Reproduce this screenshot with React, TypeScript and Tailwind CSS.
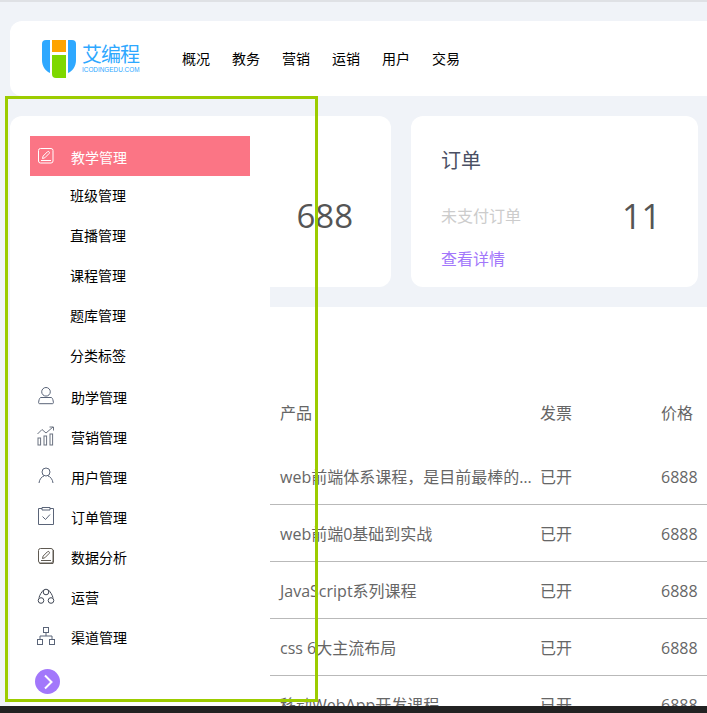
import React from 'react';

const topNav = ['概况', '教务', '营销', '运销', '用户', '交易'];
const subItems = ['班级管理', '直播管理', '课程管理', '题库管理', '分类标签'];
const rows = ['web前端体系课程，是目前最棒的课程体系', 'web前端0基础到实战', 'JavaScript系列课程', 'css 6大主流布局', '移动WebApp开发课程'];

function PenBox({ color, shadow }: { color: string; shadow?: boolean }) {
  return (
    <svg width="18" height="18" viewBox="0 0 18 18" fill="none" stroke={color} strokeWidth="1">
      <rect x="1.500" y="1.500" width="14.500" height="14.500" rx="2" />
      <path d="M5.500 11.500l.6-2.400 4.300-4.300a1.100 1.100 0 0 1 1.700 1.700l-4.300 4.300z" />
      <path d="M4 13.500h10" />
      {shadow && <path d="M2.500 16.500h13.500a1 1 0 0 0 .5-1V3" />}
    </svg>
  );
}

function PersonBox() {
  return (
    <svg width="18" height="18" viewBox="0 0 18 18" fill="none" stroke="#5a6478" strokeWidth="1">
      <circle cx="9" cy="4.800" r="4.300" />
      <path d="M3.500 10.500h11c1 .6 1.800 3 1.900 5.200 0 .6-.4 1-1 1H2.600c-.6 0-1-.4-1-1 .1-2.200.9-4.600 1.900-5.200z" />
    </svg>
  );
}

function ChartIcon() {
  return (
    <svg width="18" height="20" viewBox="0 0 18 20" fill="none" stroke="#6b7280" strokeWidth="1">
      <rect x="1" y="12" width="2.600" height="7" />
      <rect x="7" y="10" width="2.600" height="9" />
      <rect x="13" y="8" width="2.600" height="11" />
      <path d="M.5 8 5 3.500 9 7l7-6" />
      <path d="M12.500 1H16.500V4.500" />
    </svg>
  );
}

function UserIcon() {
  return (
    <svg width="16" height="18" viewBox="0 0 16 18" fill="none" stroke="#5a6478" strokeWidth="1">
      <circle cx="8" cy="5" r="4" />
      <path d="M1 16c.4-3.800 2.800-6.500 5-7M15 16c-.4-3.800-2.800-6.500-5-7" />
    </svg>
  );
}

function ClipboardIcon() {
  return (
    <svg width="18" height="19" viewBox="0 0 18 19" fill="none" stroke="#5a6478" strokeWidth="1">
      <path d="M5 1.500H1.500v16h15v-16H13" />
      <path d="M5 .5h8v2.500H5z" />
      <path d="m5.500 9.500 3 3 4.500-5" />
    </svg>
  );
}

function TriCircleIcon() {
  return (
    <svg width="18" height="18" viewBox="0 0 18 18" fill="none" stroke="#3f4654" strokeWidth="1">
      <circle cx="9" cy="5" r="2.800" />
      <circle cx="4" cy="13.500" r="2.800" />
      <circle cx="14" cy="13.500" r="2.800" />
      <path d="M6.800 2.800C4.500 5 2.800 7.800 2 10.700M11.200 2.800C13.500 5 15.200 7.800 16 10.700" />
    </svg>
  );
}

function TreeIcon() {
  return (
    <svg width="18" height="18" viewBox="0 0 18 18" fill="none" stroke="#5a6478" strokeWidth="1">
      <rect x="6.500" y=".5" width="5" height="5" />
      <rect x=".5" y="12.500" width="5" height="5" />
      <rect x="12.500" y="12.500" width="5" height="5" />
      <path d="M9 5.500V9M3 12.500V9h12v3.500" />
    </svg>
  );
}

const mainItems = [
  { label: '助学管理', icon: <PersonBox /> },
  { label: '营销管理', icon: <ChartIcon /> },
  { label: '用户管理', icon: <UserIcon /> },
  { label: '订单管理', icon: <ClipboardIcon /> },
  { label: '数据分析', icon: <PenBox color="#5f5a52" shadow /> },
  { label: '运营', icon: <TriCircleIcon /> },
  { label: '渠道管理', icon: <TreeIcon /> },
];

function Logo() {
  return (
    <div className="flex items-center gap-[6px]">
      <svg width="35" height="38" viewBox="0 0 35 38">
        <path d="M5 0h4v33C5 31.500 1 27 1 20V4a4 4 0 0 1 4-4z" fill="#2ea8ff" />
        <path d="M31 0h-4v33C31 31.500 35 27 35 20V4a4 4 0 0 0-4-4z" fill="#2ea8ff" />
        <rect x="11" y="0" width="14" height="12" fill="#ffa400" />
        <path d="M11 15h14v23H15a4 4 0 0 1-4-4z" fill="#7ed800" />
      </svg>
      <div className="flex flex-col w-[58px] text-[#2ea8ff]">
        <span className="text-[20px] leading-[23px] tracking-[-1px] whitespace-nowrap">艾编程</span>
        <span className="text-[6.400px] leading-[8px] whitespace-nowrap font-['Liberation_Sans',sans-serif]">ICODINGEDU.COM</span>
      </div>
    </div>
  );
}

export default function App() {
  return (
    <div className="relative w-[707px] h-[713px] overflow-hidden flex flex-col bg-[#f0f3f8] border-t-2 border-[#dfe1e5] font-['Open_Sans','Noto_Sans_CJK_SC',sans-serif]">
      <div className="flex-1 min-h-0 flex flex-col overflow-hidden pt-[19px] pl-[10px]">
        {/* top header */}
        <header className="h-[75px] shrink-0 bg-white rounded-l-xl flex items-center pl-[31px]">
          <Logo />
          <nav className="flex gap-[22px] ml-[42px] text-sm text-black">
            {topNav.map((t) => (
              <span key={t}>{t}</span>
            ))}
          </nav>
        </header>

        <div className="flex-1 min-h-0 flex mt-5">
          {/* sidebar */}
          <aside className="w-[260px] shrink-0 bg-white rounded-tl-xl pt-5 pl-5 text-sm text-black">
            <div className="w-[220px] h-10 bg-[#fb7585] text-white flex items-center pl-[7px]">
              <span className="w-[34px] flex pb-[1px]"><PenBox color="#fff" /></span>
              <span className="pt-1">教学管理</span>
            </div>
            {subItems.map((s) => (
              <div key={s} className="h-10 flex items-center pl-10">{s}</div>
            ))}
            <div className="mt-[2px]">
              {mainItems.map((m) => (
                <div key={m.label} className="h-10 flex items-center">
                  <span className="w-[41px] flex justify-center pl-[1px] pr-[10px] pb-1">{m.icon}</span>
                  <span>{m.label}</span>
                </div>
              ))}
            </div>
            <div className="w-[25px] h-[25px] rounded-full bg-[#a277fb] ml-[5px] mt-[11px] flex items-center justify-center">
              <svg width="12" height="16" viewBox="0 0 12 16" fill="none" stroke="#fff" strokeWidth="2">
                <path d="m3 1.500 6.500 6.500L3 14.500" />
              </svg>
            </div>
          </aside>

          {/* main column */}
          <main className="flex-1 min-w-0 flex flex-col">
            <div className="h-[191px] shrink-0 flex gap-5">
              <div className="w-[121px] h-[171px] bg-white rounded-r-xl flex justify-end pt-[75px] pr-[38px]">
                <span className="text-[33px] leading-[50px] text-[#555]">688</span>
              </div>
              <div className="w-[287px] h-[171px] bg-white rounded-xl pl-[30px] pr-[31px] pt-[30px] flex flex-col">
                <span className="text-[20px] leading-[30px] text-[#4a4f63]">订单</span>
                <div className="flex items-center justify-between mt-[15px] h-[50px]">
                  <span className="text-base text-[#ccc]">未支付订单</span>
                  <span className="text-[34px] leading-[50px] text-[#555] mr-[6px]">11</span>
                </div>
                <span className="text-base leading-6 text-[#a277fb] mt-[6px]">查看详情</span>
              </div>
            </div>

            {/* order table */}
            <div className="flex-1 min-h-0 bg-white text-base text-[#666]">
              <div className="grid grid-cols-[266px_115px_1fr] pt-[71px] h-[141px] items-center">
                <span className="pl-[10px]">产品</span>
                <span className="pl-[4px]">发票</span>
                <span className="pl-[10px]">价格</span>
              </div>
              {rows.map((r) => (
                <div key={r} className="grid grid-cols-[266px_115px_1fr] h-[57px] pt-[1px] items-center border-b border-[#b9b9b9]">
                  <span className="pl-[10px] truncate">{r}</span>
                  <span className="pl-[4px]">已开</span>
                  <span className="pl-[10px]">6888</span>
                </div>
              ))}
            </div>
          </main>
        </div>
      </div>
      <div className="h-[7px] shrink-0 bg-[#222222]" />

      {/* green selection outline over the sidebar */}
      <div className="absolute left-[5px] top-[94px] w-[313px] h-[606px] border-[3px] border-[#9ccc00] pointer-events-none" />
    </div>
  );
}
